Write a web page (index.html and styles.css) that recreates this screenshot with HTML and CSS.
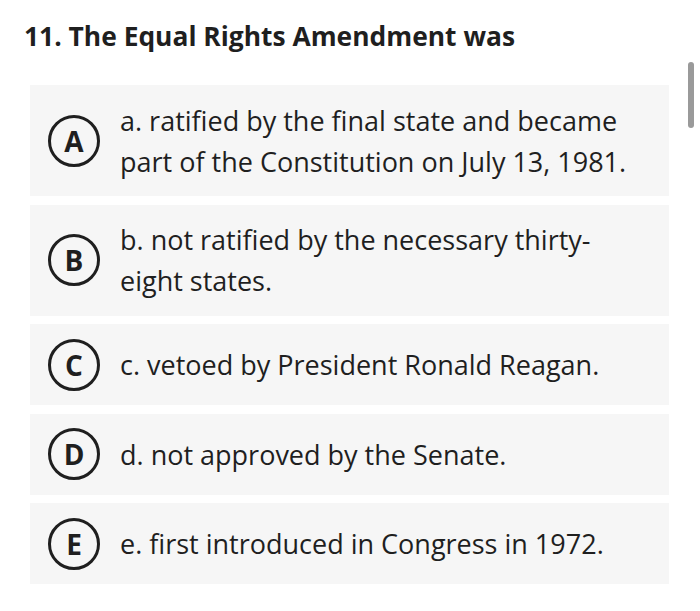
FILE: index.html
```html
<!DOCTYPE html>
<html>
<head>
<meta charset="utf-8">
<link rel="stylesheet" href="styles.css">
</head>
<body>
<div class="page">
  <h1 class="title">11. The Equal Rights Amendment was</h1>
  <div class="options">
    <div class="option"><span class="letter">A</span><span class="text">a. ratified by the final state and became part of the Constitution on July 13, 1981.</span></div>
    <div class="option"><span class="letter">B</span><span class="text">b. not ratified by the necessary thirty-eight states.</span></div>
    <div class="option"><span class="letter">C</span><span class="text">c. vetoed by President Ronald Reagan.</span></div>
    <div class="option"><span class="letter">D</span><span class="text">d. not approved by the Senate.</span></div>
    <div class="option"><span class="letter">E</span><span class="text">e. first introduced in Congress in 1972.</span></div>
  </div>
</div>
<div class="scrollbar"></div>
</body>
</html>
```
FILE: styles.css
```css
html, body {
  margin: 0;
  padding: 0;
  background: #ffffff;
}
body {
  font-family: "Open Sans", "DejaVu Sans", sans-serif;
  color: #1f1f1f;
  width: 700px;
  height: 611px;
  overflow: hidden;
  position: relative;
}
.page {
  padding: 18px 31px 0 30px;
}
.title {
  margin: 0 0 31px -6px;
  font-size: 26.4px;
  font-weight: 700;
  line-height: 36px;
  color: #1f1f1f;
}
.options {
  display: flex;
  flex-direction: column;
  gap: 8.5px;
}
.option {
  display: flex;
  align-items: center;
  gap: 20px;
  background: #f6f6f6;
  padding: 14.5px 40px 14.5px 18px;
  min-height: 52px;
}
.letter {
  flex: none;
  width: 46px;
  height: 46px;
  border: 3px solid #1f1f1f;
  border-radius: 50%;
  display: flex;
  align-items: center;
  justify-content: center;
  font-size: 28px;
  font-weight: 700;
  line-height: 1;
}
.text {
  font-size: 27px;
  line-height: 41px;
}
.scrollbar {
  position: absolute;
  left: 688px;
  top: 62px;
  width: 6px;
  height: 66px;
  border-radius: 3px;
  background: #9a9a9a;
}
```
